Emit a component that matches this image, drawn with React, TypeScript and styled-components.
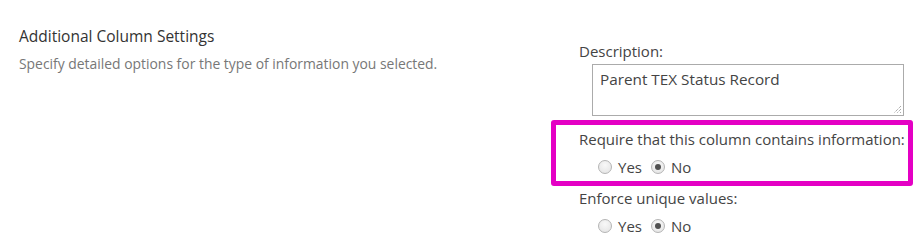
import React from "react"
import styled, { createGlobalStyle } from "styled-components"

const GlobalStyle = createGlobalStyle`
  html, body {
    margin: 0;
    padding: 0;
    background: #fff;
  }
  body {
    font-family: "Open Sans", "Noto Sans", sans-serif;
    color: #444;
  }
`

const Page = styled.div`
  width: 919px;
  height: 244px;
  overflow: hidden;
  display: grid;
  grid-template-columns: 579px 1fr;
`

const SectionInfo = styled.section`
  padding: 26px 0 0 19px;
`

const SectionTitle = styled.h3`
  margin: 0;
  font-size: 15.5px;
  font-weight: 400;
  line-height: 20px;
  color: #333;
`

const SectionHint = styled.p`
  margin: 9px 0 0;
  font-size: 13.9px;
  line-height: 18px;
  color: #777;
`

const Fields = styled.section`
  padding-top: 41px;
  display: flex;
  flex-direction: column;
`

const FieldLabel = styled.div`
  font-size: 15px;
  line-height: 20px;
  color: #444;
  white-space: nowrap;
`

const TextArea = styled.div`
  box-sizing: border-box;
  width: 312px;
  height: 52px;
  margin: 3px 0 0 13px;
  border: 1px solid #ababab;
  padding: 4px 7px;
  font-size: 15.3px;
  line-height: 20px;
  color: #444;
  position: relative;
`

const Grip = styled.svg`
  position: absolute;
  right: 1px;
  bottom: 1px;
`

const Highlight = styled.div`
  box-sizing: border-box;
  width: 362px;
  height: 66px;
  margin: 4px 0 0 -28px;
  padding: 4px 0 0 23px;
  border: 5px solid #e400c4;
  border-radius: 3px;
  overflow: hidden;
`

const Plain = styled.div<{ $top: number }>`
  margin-top: ${(p) => p.$top}px;
`

const RadioRow = styled.div`
  display: flex;
  align-items: center;
  gap: 9px;
  margin: 8px 0 0 19px;
`

const RadioOption = styled.label`
  display: flex;
  align-items: center;
  gap: 6px;
  font-size: 15px;
  line-height: 20px;
  color: #444;
`

const RadioDot = styled.span<{ $checked?: boolean }>`
  box-sizing: border-box;
  width: 14px;
  height: 14px;
  border-radius: 50%;
  border: 1px solid #b4b4b4;
  background: radial-gradient(circle at 50% 35%, #f8f8f8 0%, #e2e2e2 100%);
  display: inline-flex;
  align-items: center;
  justify-content: center;
  &::after {
    content: "";
    width: 6px;
    height: 6px;
    border-radius: 50%;
    background: ${(p) => (p.$checked ? "#505050" : "transparent")};
  }
`

interface YesNoProps {
  value: "yes" | "no"
}

const YesNo = ({ value }: YesNoProps) => (
  <RadioRow>
    <RadioOption>
      <RadioDot $checked={value === "yes"} />
      Yes
    </RadioOption>
    <RadioOption>
      <RadioDot $checked={value === "no"} />
      No
    </RadioOption>
  </RadioRow>
)

export default function App() {
  return (
    <>
      <GlobalStyle />
      <Page>
        <SectionInfo>
          <SectionTitle>Additional Column Settings</SectionTitle>
          <SectionHint>Specify detailed options for the type of information you selected.</SectionHint>
        </SectionInfo>
        <Fields>
          <FieldLabel>Description:</FieldLabel>
          <TextArea>
            Parent TEX Status Record
            <Grip width="10" height="10" viewBox="0 0 10 10">
              <path d="M9 2 L2 9 M9 5 L5 9 M9 8 L8 9" stroke="#888" strokeWidth="1" strokeDasharray="1 1" />
            </Grip>
          </TextArea>
          <Highlight>
            <FieldLabel>Require that this column contains information:</FieldLabel>
            <YesNo value="no" />
          </Highlight>
          <Plain $top={2}>
            <FieldLabel>Enforce unique values:</FieldLabel>
            <YesNo value="no" />
          </Plain>
        </Fields>
      </Page>
    </>
  )
}
